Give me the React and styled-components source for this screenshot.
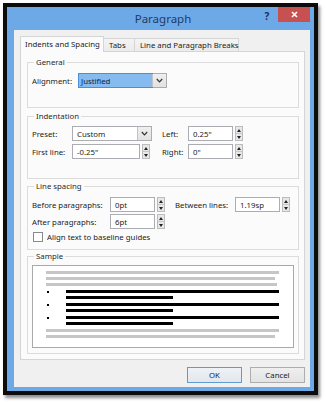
import React from "react";
import styled, { createGlobalStyle } from "styled-components";

const GlobalStyle = createGlobalStyle`
  html, body {
    margin: 0;
    padding: 0;
    background: #fff;
  }
  body {
    font-family: "Noto Sans", "DejaVu Sans", sans-serif;
    color: #1c1c1c;
  }
`;

const Page = styled.div`
  width: 326px;
  height: 404px;
  padding: 3px 0 0 3px;
  box-sizing: border-box;
`;

const Frame = styled.div`
  width: 315px;
  height: 392px;
  box-sizing: border-box;
  border: 4px solid #0c0c0c;
  box-shadow: 2px 3px 3px rgba(0, 0, 0, 0.45);
  background: #6ea9e7;
  display: flex;
  flex-direction: column;
  padding: 0 4px 4px 7px;
`;

const TitleBar = styled.div`
  height: 23px;
  flex-shrink: 0;
  display: grid;
  grid-template-columns: 1fr auto 1fr;
  align-items: start;
`;

const Title = styled.div`
  grid-column: 2;
  font-size: 11.5px;
  line-height: 23px;
  color: #1f3c62;
  padding-left: 2px;
`;

const Controls = styled.div`
  grid-column: 3;
  justify-self: end;
  display: flex;
  align-items: flex-start;
`;

const Help = styled.div`
  width: 10px;
  margin-right: 6px;
  font-size: 10px;
  font-weight: bold;
  line-height: 18px;
  text-align: center;
  color: #1b2f4d;
`;

const Close = styled.div`
  width: 32px;
  height: 15px;
  background: #c75050;
  display: flex;
  align-items: center;
  justify-content: center;
`;

const Body = styled.div`
  flex: 1;
  background: #f0f0f0;
  padding: 6px 5px 4px 6px;
  display: flex;
  flex-direction: column;
  font-size: 7.8px;
`;

const TabStrip = styled.div`
  height: 15px;
  display: flex;
  align-items: flex-end;
  position: relative;
  z-index: 2;
`;

const Tab = styled.div`
  box-sizing: border-box;
  width: ${(p) => p.$w}px;
  height: ${(p) => (p.$active ? 16 : 13)}px;
  margin-bottom: ${(p) => (p.$active ? -1 : 0)}px;
  margin-left: ${(p) => (p.$active ? 0 : -1)}px;
  border: 1px solid #d5d5d5;
  border-bottom: none;
  background: ${(p) => (p.$active ? "#fbfbfb" : "linear-gradient(#f4f4f4, #ebebeb)")};
  display: flex;
  align-items: center;
  padding: 0 0 ${(p) => (p.$active ? 2 : 0)}px ${(p) => (p.$active ? 4 : 5)}px;
  white-space: nowrap;
`;

const Panel = styled.div`
  height: 309px;
  box-sizing: border-box;
  border: 1px solid #d5d5d5;
  background: #fbfbfb;
  padding: 4px 5px 0 6px;
  display: flex;
  flex-direction: column;
`;

const Group = styled.fieldset`
  margin: ${(p) => p.$mt || 0}px 0 0;
  padding: ${(p) => p.$pt}px 4px ${(p) => p.$pb}px 4px;
  border: 1px solid #dcdcdc;
  min-width: 0;
`;

const Legend = styled.legend`
  margin-left: 2px;
  padding: 0 2px;
  font-size: 7.8px;
  line-height: 12px;
  color: #2a2a2a;
`;

const Grid = styled.div`
  display: grid;
  grid-template-columns: ${(p) => p.$cols};
  grid-auto-rows: 15px;
  row-gap: ${(p) => p.$gap}px;
  align-items: center;
`;

const Label = styled.span`
  white-space: nowrap;
`;

const Field = styled.div`
  display: flex;
  align-items: center;
`;

const Input = styled.div`
  box-sizing: border-box;
  width: ${(p) => p.$w}px;
  height: 15px;
  border: 1px solid #abadb3;
  background: #fff;
  padding-left: 4px;
  display: flex;
  align-items: center;
`;

const Spin = styled.div`
  box-sizing: border-box;
  width: 8px;
  height: 15px;
  margin-left: 2px;
  border: 1px solid #bcbcbc;
  background: #e8e8e8;
  display: flex;
  flex-direction: column;
`;

const SpinHalf = styled.div`
  flex: 1;
  display: flex;
  align-items: center;
  justify-content: center;
  border-top: ${(p) => (p.$down ? "1px solid #c8c8c8" : "none")};
`;

const Select = styled.div`
  box-sizing: border-box;
  width: ${(p) => p.$w}px;
  height: 15px;
  border: 1px solid #abadb3;
  background: #fff;
  display: flex;
`;

const SelectValue = styled.div`
  flex: 1;
  display: flex;
  align-items: center;
  padding-left: ${(p) => (p.$selected ? 2 : 4)}px;
  background: ${(p) => (p.$selected ? "#86bbef" : "transparent")};
  outline: ${(p) => (p.$selected ? "1px solid #4d8fd6" : "none")};
  color: ${(p) => (p.$selected ? "#0c1f3d" : "inherit")};
`;

const DropButton = styled.div`
  width: 13px;
  background: linear-gradient(#efefef, #e2e2e2);
  border-left: 1px solid #c3c3c3;
  display: flex;
  align-items: center;
  justify-content: center;
`;

const CheckRow = styled.div`
  display: flex;
  align-items: center;
  height: 10px;
  margin-top: 3px;
  gap: 4px;
  padding-left: 1px;
`;

const CheckBox = styled.div`
  box-sizing: border-box;
  width: 10px;
  height: 10px;
  border: 1px solid #8a8a8a;
  background: #fff;
`;

const SampleBox = styled.div`
  box-sizing: border-box;
  height: 83px;
  border: 1px solid #a9a9a9;
  background: #fff;
  padding: 5px 13px 0 13px;
  display: flex;
  flex-direction: column;
  gap: 4px;
`;

const Bars = styled.div`
  display: flex;
  flex-direction: column;
  gap: 3px;
`;

const Bar = styled.div`
  width: ${(p) => p.$w}px;
  height: 3px;
  background: ${(p) => (p.$dark ? "#000" : "#c6c6c6")};
`;

const BulletItem = styled.div`
  display: flex;
`;

const BulletMark = styled.div`
  width: 20px;
  flex-shrink: 0;
  &::before {
    content: "";
    display: block;
    width: 2px;
    height: 2px;
    margin: 1px 0 0 1px;
    background: #000;
  }
`;

const ButtonRow = styled.div`
  display: flex;
  justify-content: flex-end;
  gap: 8px;
  margin-top: 7px;
`;

const Button = styled.div`
  box-sizing: border-box;
  width: 55px;
  height: 16px;
  border: 1px solid ${(p) => (p.$primary ? "#5f9bd0" : "#adadad")};
  background: ${(p) => (p.$primary ? "linear-gradient(#eef1f5, #e3e6ea)" : "linear-gradient(#efefef, #e3e3e3)")};
  display: flex;
  align-items: center;
  justify-content: center;
`;

const Chevron = () => (
  <svg width="7" height="5" viewBox="0 0 7 5">
    <polyline points="0.8,1 3.5,3.8 6.2,1" fill="none" stroke="#333" strokeWidth="1.2" />
  </svg>
);

const Arrow = ({ down }) => (
  <svg width="4" height="3" viewBox="0 0 4 3">
    <polygon points={down ? "0,0 4,0 2,3" : "0,3 4,3 2,0"} fill="#222" />
  </svg>
);

const Spinner = () => (
  <Spin>
    <SpinHalf>
      <Arrow />
    </SpinHalf>
    <SpinHalf $down>
      <Arrow down />
    </SpinHalf>
  </Spin>
);

const NumberBox = ({ w, value }) => (
  <Field>
    <Input $w={w}>{value}</Input>
    <Spinner />
  </Field>
);

const Dropdown = ({ w, value, selected }) => (
  <Select $w={w}>
    <SelectValue $selected={selected}>{value}</SelectValue>
    <DropButton>
      <Chevron />
    </DropButton>
  </Select>
);

const bullets = [0, 1, 2];

export default function App() {
  return (
    <Page>
      <GlobalStyle />
      <Frame>
        <TitleBar>
          <Title>Paragraph</Title>
          <Controls>
            <Help>?</Help>
            <Close>
              <svg width="7" height="7" viewBox="0 0 7 7">
                <path d="M1 1L6 6M6 1L1 6" stroke="#fff" strokeWidth="1.6" />
              </svg>
            </Close>
          </Controls>
        </TitleBar>
        <Body>
          <TabStrip>
            <Tab $active $w={84}>Indents and Spacing</Tab>
            <Tab $w={32}>Tabs</Tab>
            <Tab $w={105}>Line and Paragraph Breaks</Tab>
          </TabStrip>
          <Panel>
            <Group $pt={5} $pb={19}>
              <Legend>General</Legend>
              <Grid $cols="46px auto" $gap={0}>
                <Label>Alignment:</Label>
                <Dropdown w={89} value="Justified" selected />
              </Grid>
            </Group>
            <Group $mt={2} $pt={4} $pb={19}>
              <Legend>Indentation</Legend>
              <Grid $cols="40px 90px 26px auto" $gap={3}>
                <Label>Preset:</Label>
                <Dropdown w={80} value="Custom" />
                <Label>Left:</Label>
                <NumberBox w={45} value={"0.25\""} />
                <Label>First line:</Label>
                <NumberBox w={68} value={"-0.25\""} />
                <Label>Right:</Label>
                <NumberBox w={45} value={"0\""} />
              </Grid>
            </Group>
            <Group $mt={1} $pt={5} $pb={7}>
              <Legend>Line spacing</Legend>
              <Grid $cols="78px 65px 60px auto" $gap={2}>
                <Label>Before paragraphs:</Label>
                <NumberBox w={45} value="0pt" />
                <Label>Between lines:</Label>
                <NumberBox w={45} value="1.19sp" />
                <Label>After paragraphs:</Label>
                <NumberBox w={45} value="6pt" />
              </Grid>
              <CheckRow>
                <CheckBox />
                <Label>Align text to baseline guides</Label>
              </CheckRow>
            </Group>
            <Group $pt={3} $pb={5}>
              <Legend>Sample</Legend>
              <SampleBox>
                <Bars>
                  <Bar $w={233} />
                  <Bar $w={229} />
                  <Bar $w={231} />
                </Bars>
                {bullets.map((i) => (
                  <BulletItem key={i}>
                    <BulletMark />
                    <Bars>
                      <Bar $dark $w={213} />
                      <Bar $dark $w={107} />
                    </Bars>
                  </BulletItem>
                ))}
                <Bars>
                  <Bar $w={233} />
                  <Bar $w={229} />
                </Bars>
              </SampleBox>
            </Group>
          </Panel>
          <ButtonRow>
            <Button $primary>OK</Button>
            <Button>Cancel</Button>
          </ButtonRow>
        </Body>
      </Frame>
    </Page>
  );
}
